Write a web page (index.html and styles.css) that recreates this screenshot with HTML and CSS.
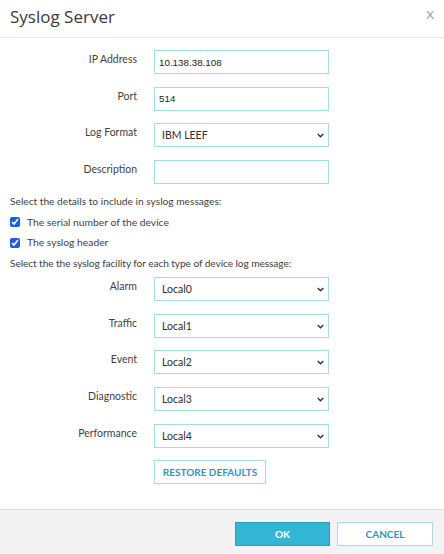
FILE: index.html
```html
<!DOCTYPE html>
<html>
<head>
<meta charset="utf-8">
<link rel="stylesheet" href="styles.css">
</head>
<body>
<div class="dialog">
  <div class="header">
    <div class="title">Syslog Server</div>
    <div class="close">X</div>
  </div>
  <div class="content">
    <div class="form">
      <label class="label">IP Address</label>
      <input class="field" type="text" value="10.138.38.108">
      <label class="label">Port</label>
      <input class="field" type="text" value="514">
      <label class="label">Log Format</label>
      <div class="select-wrap">
        <select class="select"><option>IBM LEEF</option></select>
        <svg class="chev" width="7" height="5" viewBox="0 0 7 5"><path d="M0.7 0.9 L3.5 3.7 L6.3 0.9" fill="none" stroke="#333" stroke-width="1.4"/></svg>
      </div>
      <label class="label">Description</label>
      <input class="field" type="text" value="">
    </div>
    <p class="note">Select the details to include in syslog messages:</p>
    <div class="check-row"><input class="check" type="checkbox" checked><span>The serial number of the device</span></div>
    <div class="check-row"><input class="check" type="checkbox" checked><span>The syslog header</span></div>
    <p class="note note-tight">Select the the syslog facility for each type of device log message:</p>
    <div class="form facility">
      <label class="label">Alarm</label>
      <div class="select-wrap">
        <select class="select"><option>Local0</option></select>
        <svg class="chev" width="7" height="5" viewBox="0 0 7 5"><path d="M0.7 0.9 L3.5 3.7 L6.3 0.9" fill="none" stroke="#333" stroke-width="1.4"/></svg>
      </div>
      <label class="label">Traffic</label>
      <div class="select-wrap">
        <select class="select"><option>Local1</option></select>
        <svg class="chev" width="7" height="5" viewBox="0 0 7 5"><path d="M0.7 0.9 L3.5 3.7 L6.3 0.9" fill="none" stroke="#333" stroke-width="1.4"/></svg>
      </div>
      <label class="label">Event</label>
      <div class="select-wrap">
        <select class="select"><option>Local2</option></select>
        <svg class="chev" width="7" height="5" viewBox="0 0 7 5"><path d="M0.7 0.9 L3.5 3.7 L6.3 0.9" fill="none" stroke="#333" stroke-width="1.4"/></svg>
      </div>
      <label class="label">Diagnostic</label>
      <div class="select-wrap">
        <select class="select"><option>Local3</option></select>
        <svg class="chev" width="7" height="5" viewBox="0 0 7 5"><path d="M0.7 0.9 L3.5 3.7 L6.3 0.9" fill="none" stroke="#333" stroke-width="1.4"/></svg>
      </div>
      <label class="label">Performance</label>
      <div class="select-wrap">
        <select class="select"><option>Local4</option></select>
        <svg class="chev" width="7" height="5" viewBox="0 0 7 5"><path d="M0.7 0.9 L3.5 3.7 L6.3 0.9" fill="none" stroke="#333" stroke-width="1.4"/></svg>
      </div>
      <span></span>
      <div><button class="btn btn-outline restore">RESTORE DEFAULTS</button></div>
    </div>
  </div>
  <div class="footer">
    <button class="btn btn-primary ok">OK</button>
    <button class="btn btn-outline cancel">CANCEL</button>
  </div>
</div>
</body>
</html>
```
FILE: styles.css
```css
html, body {
  margin: 0;
  padding: 0;
  background: #ffffff;
}
body {
  font-family: Lato, "Noto Sans", sans-serif;
  color: #444;
}
.dialog {
  width: 444px;
  height: 554px;
  display: flex;
  flex-direction: column;
  background: #fff;
}
.header {
  height: 37px;
  border-bottom: 1px solid #e7e7e7;
  display: flex;
  justify-content: space-between;
  align-items: flex-start;
  padding: 0 10px;
  flex: none;
}
.title {
  font-family: "Open Sans", sans-serif;
  font-weight: 400;
  font-size: 17px;
  line-height: 23px;
  color: #3a3a3a;
  margin-top: 5px;
}
.close {
  font-size: 12px;
  line-height: 14px;
  color: #9c9c9c;
  margin-top: 8px;
}
.content {
  flex: 1;
  padding: 12px 0 0 10px;
}
.form {
  display: grid;
  grid-template-columns: 127px 175px;
  column-gap: 17px;
  row-gap: 12.67px;
}
.label {
  text-align: right;
  font-size: 10.5px;
  line-height: 13px;
  padding-top: 3px;
  color: #3f3f3f;
}
.field {
  box-sizing: border-box;
  width: 175px;
  height: 24px;
  margin: 0;
  border: 1px solid #a6dce3;
  border-radius: 0;
  padding: 0 4px;
  font-family: "Liberation Sans", Arial, sans-serif;
  font-size: 9.8px;
  color: #222;
  outline: none;
  background: #fff;
}
.select-wrap {
  position: relative;
  width: 175px;
  height: 24px;
}
.select {
  -webkit-appearance: none;
  appearance: none;
  box-sizing: border-box;
  width: 175px;
  height: 24px;
  margin: 0;
  border: 1px solid #a6dce3;
  border-radius: 0;
  padding: 0 0 0 7px;
  font-family: Lato, sans-serif;
  font-size: 10.5px;
  color: #2f2f2f;
  background: #fff;
  outline: none;
}
.chev {
  position: absolute;
  right: 5px;
  top: 10px;
}
.note {
  margin: 11px 0 0 0;
  font-size: 10.2px;
  line-height: 13px;
  color: #3f3f3f;
}
.note-tight {
  letter-spacing: -0.1px;
}
.check-row {
  display: flex;
  align-items: center;
  gap: 7px;
  margin-top: 7.67px;
  font-size: 10.3px;
  line-height: 13px;
  color: #3f3f3f;
}
.check-row + .note {
  margin-top: 7.67px;
}
.check {
  width: 10px;
  height: 10px;
  margin: 0;
  accent-color: #1a5fd8;
}
.facility {
  margin-top: 7px;
}
.btn {
  box-sizing: border-box;
  height: 24px;
  margin: 0;
  padding: 0;
  font-family: Lato, sans-serif;
  font-weight: 700;
  font-size: 10px;
  border-radius: 0;
  cursor: pointer;
}
.btn-outline {
  background: #fff;
  border: 1px solid #a9dbe5;
  color: #2b98c0;
}
.btn-primary {
  background: #33b6d5;
  border: 1px solid #2a9fbf;
  color: #fff;
}
.restore {
  width: 112px;
}
.footer {
  flex: none;
  border-top: 1px solid #dedede;
  background: #f4f3f3;
  display: flex;
  justify-content: flex-end;
  align-items: flex-start;
  gap: 7px;
  padding: 12px 11px 0 0;
  box-sizing: border-box;
  height: 45px;
}
.ok {
  width: 95px;
}
.cancel {
  width: 96px;
}
```
